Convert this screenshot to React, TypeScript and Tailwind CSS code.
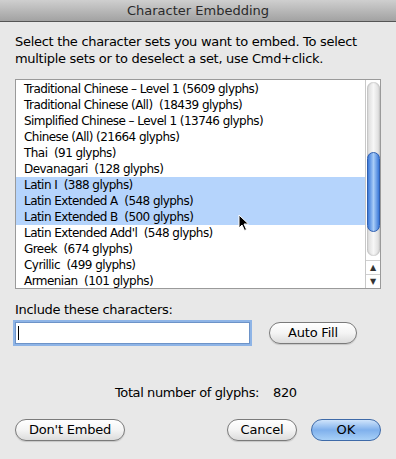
import React from "react";

const items = [
  { label: "Traditional Chinese – Level 1 (5609 glyphs)", sel: false },
  { label: "Traditional Chinese (All)  (18439 glyphs)", sel: false },
  { label: "Simplified Chinese – Level 1 (13746 glyphs)", sel: false },
  { label: "Chinese (All) (21664 glyphs)", sel: false },
  { label: "Thai  (91 glyphs)", sel: false },
  { label: "Devanagari  (128 glyphs)", sel: false },
  { label: "Latin I  (388 glyphs)", sel: true },
  { label: "Latin Extended A  (548 glyphs)", sel: true },
  { label: "Latin Extended B  (500 glyphs)", sel: true },
  { label: "Latin Extended Add'l  (548 glyphs)", sel: false },
  { label: "Greek  (674 glyphs)", sel: false },
  { label: "Cyrillic  (499 glyphs)", sel: false },
  { label: "Armenian  (101 glyphs)", sel: false },
];

const font = { fontFamily: '"DejaVu Sans", "Liberation Sans", sans-serif' };

const PillButton = ({ children, className = "" }: { children: React.ReactNode; className?: string }) => (
  <button
    className={
      "h-[22px] rounded-full border border-[#7a7a7a] bg-gradient-to-b from-white via-[#f4f4f4] to-[#dcdcdc] text-[13px] tracking-[-0.2px] text-black shadow-[0_1px_1px_rgba(0,0,0,0.15)] " +
      className
    }
  >
    {children}
  </button>
);

const Scrollbar = () => (
  <div className="flex w-[15px] flex-col border-l border-[#c8c8c8] bg-white">
    <div className="relative mx-auto mt-[2px] h-[174px] w-[13px] rounded-full bg-gradient-to-r from-[#d8d8d8] via-[#f7f7f7] to-[#d8d8d8] shadow-[inset_0_0_2px_rgba(0,0,0,0.35)]">
      <div className="absolute left-0 top-[70px] h-[80px] w-[13px] rounded-full border border-[#2f5fb0] bg-gradient-to-r from-[#3a78d8] via-[#a9cdf7] to-[#3a78d8]" />
    </div>
    <div className="mt-auto flex h-[14px] items-center justify-center border-t border-[#d0d0d0] text-[8px] text-[#333]">▲</div>
    <div className="flex h-[14px] items-center justify-center border-t border-[#d0d0d0] text-[8px] text-[#333]">▼</div>
  </div>
);

export default function App() {
  return (
    <div className="relative h-[459px] w-[396px] overflow-hidden bg-[#e8e8e8]" style={font}>
      {/* title bar */}
      <div className="flex h-[22px] items-center justify-center border-b border-[#555] bg-gradient-to-b from-[#cfcfcf] to-[#a2a2a2] text-[13px] text-[#2a2a2a]">
        Character Embedding
      </div>

      <div className="px-[15px]">
        <p className="mt-[11px] text-[13px] leading-[17px] tracking-[-0.3px] text-black">
          Select the character sets you want to embed. To select
          <br />
          multiple sets or to deselect a set, use Cmd+click.
        </p>

        {/* list */}
        <div className="mt-[12px] flex h-[210px] w-[366px] overflow-hidden border border-[#9a9a9a] bg-white">
          <div className="flex-1 overflow-hidden pt-px">
            {items.map((it) => (
              <div
                key={it.label}
                className={"h-[16px] whitespace-pre pl-[8px] text-[12px] leading-[16px] tracking-[-0.55px] text-black " + (it.sel ? "bg-[#b5d4fc]" : "")}
              >
                {it.label}
              </div>
            ))}
          </div>
          <Scrollbar />
        </div>

        <div className="mt-[12px] text-[13px] leading-[17px] tracking-[-0.3px] text-black">Include these characters:</div>

        <div className="mt-[4px] flex items-center">
          <div className="flex h-[22px] w-[235px] items-center border border-[#6d93c8] bg-white pl-[2px] shadow-[0_0_0_2px_#8eb4e6]">
            <div className="h-[14px] w-px bg-black" />
          </div>
          <PillButton className="ml-[19px] w-[88px]">Auto Fill</PillButton>
        </div>

        <div className="mt-[40px] flex text-[13px] leading-[17px] tracking-[-0.4px] text-black">
          <span className="ml-[100px]">Total number of glyphs:</span>
          <span className="ml-[14px]">820</span>
        </div>

        <div className="mt-[18px] flex items-center">
          <PillButton className="w-[110px]">Don't Embed</PillButton>
          <PillButton className="ml-auto w-[70px]">Cancel</PillButton>
          <button className="ml-[14px] h-[22px] w-[70px] rounded-full border border-[#3e6aa8] bg-gradient-to-b from-[#cfe4fb] via-[#7fb0ec] to-[#a8d0f7] text-[13px] text-black">
            OK
          </button>
        </div>
      </div>

      {/* mouse cursor */}
      <svg className="absolute left-[238px] top-[214px]" width="12" height="18" viewBox="0 0 12 18">
        <path d="M1 1 L1 14 L4 11 L6.5 16.5 L8.5 15.5 L6 10 L10.5 10 Z" fill="black" stroke="white" strokeWidth="1" />
      </svg>
    </div>
  );
}
